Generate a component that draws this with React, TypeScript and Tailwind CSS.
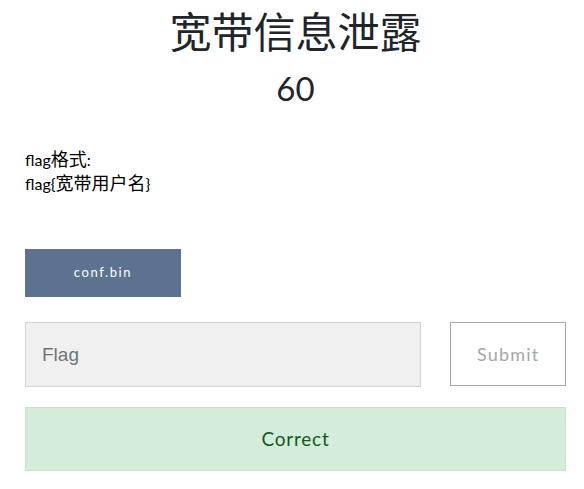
export default function App() {
  return (
    <div className="w-[584px] h-[489px] bg-white overflow-hidden font-['Lato','Noto_Sans_CJK_SC',sans-serif] text-[#212529]">
      <div className="pl-[25px] pr-[18px]">
        <h3 className="text-center text-[42px] leading-[48px] pt-[8px] font-normal">宽带信息泄露</h3>
        <h4 className="text-center text-[33px] leading-[40px] mt-[12px] font-normal">60</h4>

        <div className="mt-[40px] text-[16px] leading-[24px] text-black">
          <p className="h-[24px]">
            flag<span className="text-[18px] leading-none">格式</span>:
          </p>
          <p className="h-[24px]">
            flag{'{'}<span className="text-[18px] leading-none">宽带用户名</span>{'}'}
          </p>
        </div>

        <div className="mt-[53px]">
          <button className="w-[156px] h-[48px] bg-[#5c7290] text-white text-[13px] tracking-[1.6px]">
            conf.bin
          </button>
        </div>

        <div className="mt-[25px] flex gap-[29px]">
          <input
            placeholder="Flag"
            className="w-[397px] h-[65px] bg-[#f0f0f0] border border-[#ced4da] px-[16px] text-[19px] font-['Liberation_Sans',sans-serif] placeholder:text-[#6c757d]"
          />
          <button className="w-[116px] h-[64px] border border-[#a6a6a6] text-[#a2a7ad] text-[18px] tracking-[1.2px] bg-white">
            Submit
          </button>
        </div>

        <div className="mt-[20px] h-[64px] bg-[#d4edda] border border-[#c3e6cb] text-[#155724] text-[19px] tracking-[0.8px] flex items-center justify-center">
          Correct
        </div>
      </div>
    </div>
  );
}
